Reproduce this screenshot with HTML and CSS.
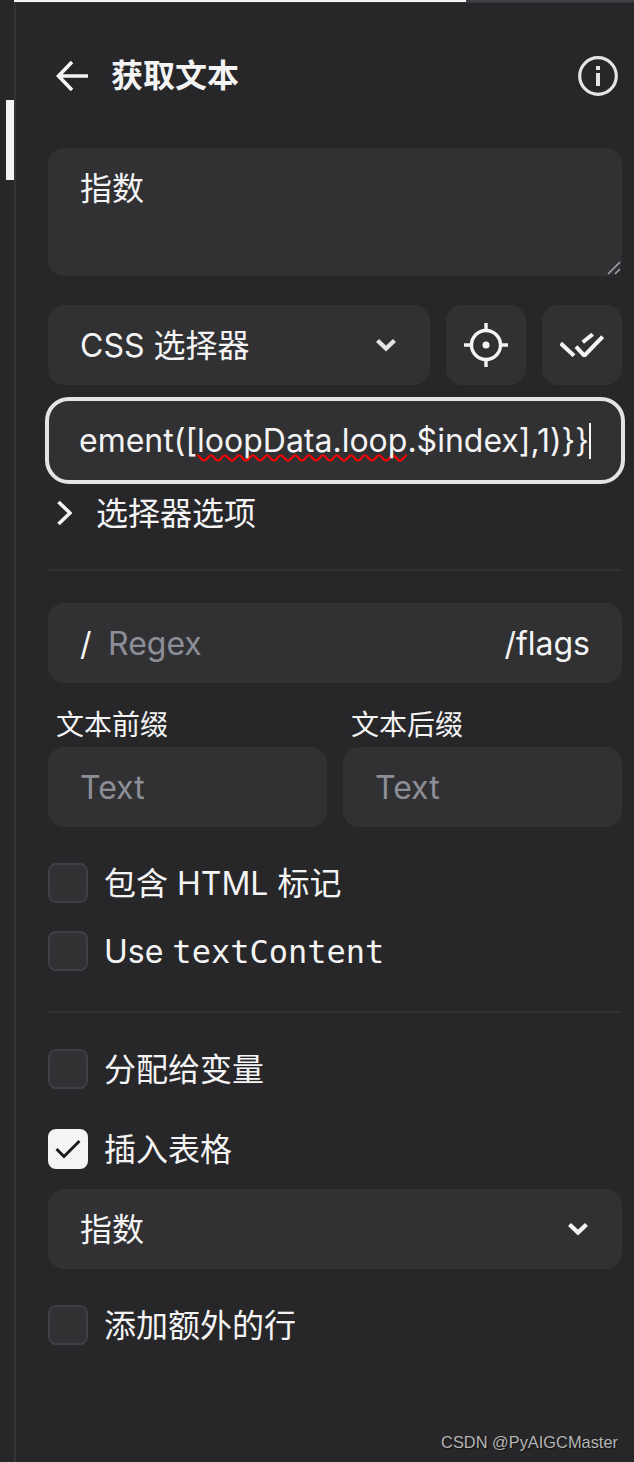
FILE: index.html
```html
<!DOCTYPE html>
<html lang="zh">
<head>
<meta charset="utf-8">
<title>获取文本</title>
<link rel="stylesheet" href="styles.css">
</head>
<body>
<div class="app">
  <aside class="rail"><div class="rail-thumb"></div></aside>
  <main class="main">
    <div class="progress"><div class="progress-fill"></div></div>
    <div class="panel">
      <header class="header">
        <svg class="back" viewBox="0 0 32 32" width="32" height="32" fill="none" stroke="#f4f4f5" stroke-width="3.600"><path d="M32 16H3M16 2 2.500 16 16 30"/></svg>
        <h1 class="title">获取文本</h1>
        <svg class="info" viewBox="0 0 40 40" width="40" height="40" fill="none"><circle cx="20" cy="20" r="18.300" stroke="#e4e4e7" stroke-width="3.200"/><rect x="18" y="10" width="4" height="4" fill="#e4e4e7"/><rect x="18" y="17" width="4" height="13" fill="#e4e4e7"/></svg>
      </header>

      <div class="textarea">指数
        <svg class="grip" viewBox="0 0 14 14" width="14" height="14" fill="none" stroke="#a1a1aa" stroke-width="1.600"><path d="M1 13 13 1M8 13l5-5"/></svg>
      </div>

      <div class="selector-row">
        <div class="field select grow"><span class="txt">CSS 选择器</span>
          <svg class="chev" viewBox="0 0 20 14" width="20" height="14" fill="none" stroke="#e4e4e7" stroke-width="4.400"><path d="M1.500 2.500 10 10.500 18.500 2.500"/></svg>
        </div>
        <div class="icon-btn">
          <svg viewBox="0 0 44 44" width="44" height="44" fill="none" stroke="#f4f4f5" stroke-width="3.400"><circle cx="22" cy="22" r="14.500"/><circle cx="22" cy="22" r="3.500" fill="#f4f4f5" stroke="none"/><path d="M22 0v8M22 36v8M0 22h8M36 22h8"/></svg>
        </div>
        <div class="icon-btn">
          <svg viewBox="0 0 44 24" width="44" height="24" fill="none" stroke="#f4f4f5" stroke-width="4"><path d="M0.700 10.300 14 22.700M16 13.700l8.300 9L42.700 3.700M22.700 9.300 32.700 1.300"/></svg>
        </div>
      </div>

      <div class="focus-input"><span class="focus-text">ement([<span class="squiggle">loopData.loop</span>.$index],1)}}</span><span class="caret"></span></div>

      <div class="disclosure">
        <svg viewBox="0 0 16 26" width="16" height="26" fill="none" stroke="#f4f4f5" stroke-width="3.600"><path d="M2.500 2 14 13 2.500 24"/></svg>
        <span class="txt">选择器选项</span>
      </div>

      <hr class="rule rule-a">

      <div class="field regex"><span class="slash txt">/</span><span class="placeholder txt">Regex</span><span class="flags txt">/flags</span></div>

      <div class="affix-row">
        <label class="affix"><span class="affix-label">文本前缀</span><span class="field"><span class="placeholder txt">Text</span></span></label>
        <label class="affix"><span class="affix-label">文本后缀</span><span class="field"><span class="placeholder txt">Text</span></span></label>
      </div>

      <div class="check c1"><span class="box"></span><span class="txt">包含 HTML 标记</span></div>
      <div class="check c2"><span class="box"></span><span class="txt">Use <code class="mono">textContent</code></span></div>

      <hr class="rule rule-b">

      <div class="check c3"><span class="box"></span><span class="txt">分配给变量</span></div>
      <div class="check c4"><span class="box on"><svg viewBox="0 0 26 20" width="26" height="20" fill="none" stroke="#18181b" stroke-width="2.800"><path d="M1.500 10 9 17.500 24.500 2"/></svg></span><span class="txt">插入表格</span></div>

      <div class="field select wide"><span class="txt">指数</span>
        <svg class="chev" viewBox="0 0 20 14" width="20" height="14" fill="none" stroke="#f4f4f5" stroke-width="4.400"><path d="M1.500 2.500 10 10.500 18.500 2.500"/></svg>
      </div>

      <div class="check c5"><span class="box"></span><span class="txt">添加额外的行</span></div>
    </div>
  </main>
</div>
<div class="watermark">CSDN @PyAIGCMaster</div>
</body>
</html>
```
FILE: styles.css
```css
* { box-sizing: border-box; }
html, body { margin: 0; height: 100%; }
body {
  background: #27272a;
  color: #f4f4f5;
  font-family: Inter, "Noto Sans CJK SC", sans-serif;
  font-size: 32px;
  line-height: 40px;
  overflow: hidden;
}
.app { display: flex; height: 1462px; }
.rail { width: 14px; padding: 100px 0 0 6px; flex: none; }
.rail-thumb { width: 8px; height: 80px; background: #f4f4f5; }
.main { flex: 1; border-left: 2px solid #333336; min-width: 0; }
.progress { height: 3px; margin-left: -2px; background: #3f3f46; border-bottom: 1px solid #333336; }
.progress-fill { width: 452px; height: 2px; background: #f4f4f5; }
.panel { padding: 53px 12px 0 32px; display: flex; flex-direction: column; }

.txt { padding-top: 2px; }

.header { display: flex; align-items: center; height: 40px; padding-left: 8px; }
.back { flex: none; }
.title { margin: 0 0 0 23px; flex: 1; font-size: 32px; font-weight: 700; line-height: 40px; }
.info { flex: none; margin-right: 4px; }

.textarea {
  position: relative;
  height: 128px;
  margin-top: 52px;
  padding: 21px 32px;
  background: #313134;
  border-radius: 16px;
}
.grip { position: absolute; right: 1px; bottom: 1px; }

.field {
  display: flex;
  align-items: center;
  height: 80px;
  padding: 0 32px;
  background: #313134;
  border-radius: 16px;
}
.select { justify-content: space-between; padding-right: 34px; }
.chev { flex: none; }
.selector-row { display: flex; gap: 16px; margin-top: 29px; }
.grow { flex: 1; min-width: 0; }
.icon-btn {
  width: 80px;
  height: 80px;
  flex: none;
  display: flex;
  align-items: center;
  justify-content: center;
  background: #313134;
  border-radius: 16px;
}

.focus-input {
  display: flex;
  align-items: center;
  height: 87px;
  margin: 12px -3px 0;
  padding: 0 0 0 30px;
  background: #313134;
  border: 4px solid #e4e4e7;
  border-radius: 24px;
  white-space: nowrap;
  overflow: hidden;
}
.squiggle {
  padding-bottom: 2px;
  background: url("data:image/svg+xml,%3Csvg xmlns='http://www.w3.org/2000/svg' width='14' height='8'%3E%3Cpath d='M0 1.200C2.500 1.200 4.500 6.800 7 6.800S11.500 1.200 14 1.200' fill='none' stroke='%23f00' stroke-width='2'/%3E%3C/svg%3E") repeat-x left bottom;
}
.caret { flex: none; width: 2px; height: 36px; background: #f4f4f5; }

.disclosure { display: flex; align-items: center; gap: 24px; height: 40px; margin-top: 9px; padding-left: 8px; }

.rule { height: 2px; margin: 0; border: 0; background: #323235; flex: none; }
.rule-a { margin-top: 36px; }
.rule-b { margin-top: 40px; }

.regex { margin-top: 32px; }
.slash { width: 28px; }
.placeholder { color: #8c8e97; }
.flags { margin-left: auto; }

.affix-row { display: flex; gap: 16px; margin-top: 21px; }
.affix { flex: 1; display: flex; flex-direction: column; }
.affix-label { font-size: 28px; line-height: 40px; height: 43px; padding: 1px 0 0 8px; }

.check { display: flex; align-items: center; gap: 16px; height: 40px; }
.c1 { margin-top: 36px; }
.c2 { margin-top: 28px; }
.c3 { margin-top: 36px; }
.c4 { margin-top: 40px; }
.c5 { margin-top: 36px; }
.box {
  width: 40px;
  height: 40px;
  flex: none;
  display: flex;
  align-items: center;
  justify-content: center;
  background: #313134;
  border: 2px solid #3f3f46;
  border-radius: 8px;
}
.box.on { background: #f4f4f5; border-color: #f4f4f5; }
.mono { font-family: "DejaVu Sans Mono", monospace; font-size: 32px; }
.wide { margin-top: 20px; }

.watermark {
  position: absolute;
  right: 16px;
  bottom: 8px;
  font-family: "Liberation Sans", sans-serif;
  font-size: 16.400px;
  line-height: 24px;
  color: #b4b4b4;
  text-shadow: 1px 1px 1px #111;
}
```
